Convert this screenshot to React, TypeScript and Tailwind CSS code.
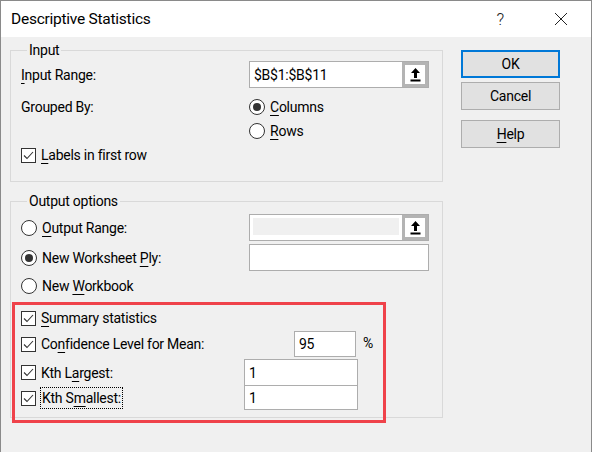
import React from 'react';

function Radio({ on }: { on?: boolean }) {
  return (
    <span className="flex h-[16px] w-[16px] shrink-0 items-center justify-center rounded-full border border-[#333333] bg-white">
      {on && <span className="h-[8px] w-[8px] rounded-full bg-[#333333]" />}
    </span>
  );
}

function Check() {
  return (
    <span className="flex h-[15px] w-[15px] shrink-0 items-center justify-center border border-[#333333] bg-white">
      <svg width="11" height="9" viewBox="0 0 11 9">
        <path d="M1 4.5 L4 7.5 L10 1" fill="none" stroke="#333333" strokeWidth="1.1" />
      </svg>
    </span>
  );
}

function UpButton() {
  return (
    <span className="flex h-full w-[26px] shrink-0 items-center justify-center border-[3px] border-[#b4b4b4] bg-white">
      <svg width="11" height="14" viewBox="0 0 11 14">
        <path d="M5.5 0 L10 5 L7 5 L7 10 L4 10 L4 5 L1 5 Z" fill="#000" />
        <rect x="0.5" y="11.5" width="10" height="2" fill="#000" />
      </svg>
    </span>
  );
}

// label text with one access-key letter underlined
function Key({ pre = '', k, post = '' }: { pre?: string; k: string; post?: string }) {
  return (
    <span className="whitespace-pre">
      {pre}
      <u className="underline decoration-1 underline-offset-[3px]">{k}</u>
      {post}
    </span>
  );
}

function Option({ children, radio, on }: { children: React.ReactNode; radio?: boolean; on?: boolean }) {
  return (
    <span className="flex h-[24px] items-center gap-[5px]">
      {radio ? <Radio on={on} /> : <Check />}
      {children}
    </span>
  );
}

function DlgButton({ children, primary }: { children: React.ReactNode; primary?: boolean }) {
  return (
    <div
      className={
        'flex h-[28px] w-[99px] items-center justify-center bg-[#e1e1e1] text-black ' +
        (primary ? 'border-2 border-[#0078d7]' : 'border border-[#adadad]')
      }
    >
      {children}
    </div>
  );
}

export default function App() {
  return (
    <div className="relative flex h-[453px] w-[592px] flex-col overflow-hidden border border-[#8a8a8a] bg-[#f0f0f0] font-['Roboto',sans-serif] text-[14px] leading-[20px] tracking-[-0.25px] text-black">
      {/* title bar */}
      <div className="flex h-[36px] shrink-0 items-center bg-white pl-[10px]">
        <span className="text-[15.5px] text-black">Descriptive Statistics</span>
        <span className="ml-auto mr-[50px] text-[17px] font-light text-[#222]">?</span>
        <svg width="14" height="14" viewBox="0 0 14 14" className="mr-[23px]">
          <path d="M1 1 L13 13 M13 1 L1 13" stroke="#222" strokeWidth="1" />
        </svg>
      </div>

      <div className="flex flex-1 pt-[3px]">
        <div className="ml-[9px] flex w-[433px] flex-col">
          {/* Input group */}
          <fieldset className="border border-[#d9d9d9] pb-[14px] pl-[10px]">
            <legend className="ml-[6px] px-[2px] leading-[20px]">Input</legend>
            <div className="mt-[1px] flex h-[27px] items-center">
              <span className="w-[228px]">
                <Key k="I" post="nput Range:" />
              </span>
              <div className="flex h-[27px] w-[180px] border border-[#adadad] bg-white">
                <span className="flex flex-1 items-center pl-[4px]">$B$1:$B$11</span>
                <UpButton />
              </div>
            </div>
            <div className="mt-[7px] flex h-[24px] items-center">
              <span className="w-[228px]">Grouped By:</span>
              <Option radio on>
                <Key k="C" post="olumns" />
              </Option>
            </div>
            <div className="flex h-[24px] items-center">
              <span className="w-[228px]" />
              <Option radio>
                <Key k="R" post="ows" />
              </Option>
            </div>
            <Option>
              <Key k="L" post="abels in first row" />
            </Option>
          </fieldset>

          {/* Output group */}
          <fieldset className="mt-[9px] border border-[#d9d9d9] pb-[7px] pl-[10px]">
            <legend className="ml-[6px] px-[2px] leading-[20px]">Output options</legend>
            <div className="mt-[3px] flex h-[27px] items-start">
              <span className="w-[228px] pt-[2px]">
                <Option radio>
                  <Key k="O" post="utput Range:" />
                </Option>
              </span>
              <div className="flex h-[27px] w-[180px] border border-[#adadad] bg-white">
                <span className="flex flex-1 p-[3px]">
                  <span className="h-[17px] flex-1 bg-[#f0f0f0]" />
                </span>
                <UpButton />
              </div>
            </div>
            <div className="mt-[3px] flex h-[27px] items-start">
              <span className="w-[228px] pt-[2px]">
                <Option radio on>
                  <Key pre="New Worksheet " k="P" post="ly:" />
                </Option>
              </span>
              <div className="h-[27px] w-[180px] border border-[#adadad] bg-white" />
            </div>
            <div className="mt-[3px]">
              <Option radio>
                <Key pre="New " k="W" post="orkbook" />
              </Option>
            </div>
            <div className="mt-[8px]">
              <Option>
                <Key k="S" post="ummary statistics" />
              </Option>
            </div>
            <div className="mt-[1px] flex h-[26px] items-center">
              <span className="w-[273px]">
                <Option>
                  <Key pre="Co" k="n" post="fidence Level for Mean:" />
                </Option>
              </span>
              <div className="flex h-[26px] w-[62px] items-center border border-[#adadad] bg-white pl-[4px]">95</div>
              <span className="ml-[7px] pb-[3px]">%</span>
            </div>
            <div className="mt-[2px] flex h-[27px] items-center">
              <span className="w-[223px]">
                <Option>
                  <Key pre="Kth L" k="a" post="rgest:" />
                </Option>
              </span>
              <div className="flex h-[27px] w-[114px] items-center border border-[#adadad] bg-white pl-[4px]">1</div>
            </div>
            <div className="flex h-[24px] items-center">
              <span className="w-[223px]">
                <span className="flex h-[24px] items-center gap-[4px]">
                  <Check />
                  <span className="border border-dotted border-black px-[1px] leading-[20px]">
                    <Key pre="Kth S" k="m" post="allest:" />
                  </span>
                </span>
              </span>
              <div className="flex h-[24px] w-[114px] items-center border border-t-0 border-[#adadad] bg-white pl-[4px]">1</div>
            </div>
          </fieldset>
        </div>

        <div className="ml-[18px] flex flex-col pt-[10px]">
          <DlgButton primary>OK</DlgButton>
          <div className="mt-[4px]">
            <DlgButton>Cancel</DlgButton>
          </div>
          <div className="mt-[10px]">
            <DlgButton>
              <Key k="H" post="elp" />
            </DlgButton>
          </div>
        </div>
      </div>

      {/* highlight annotation */}
      <div className="absolute left-[11px] top-[301px] h-[121px] w-[374px] border-[3px] border-[#ef424a]" />
    </div>
  );
}
